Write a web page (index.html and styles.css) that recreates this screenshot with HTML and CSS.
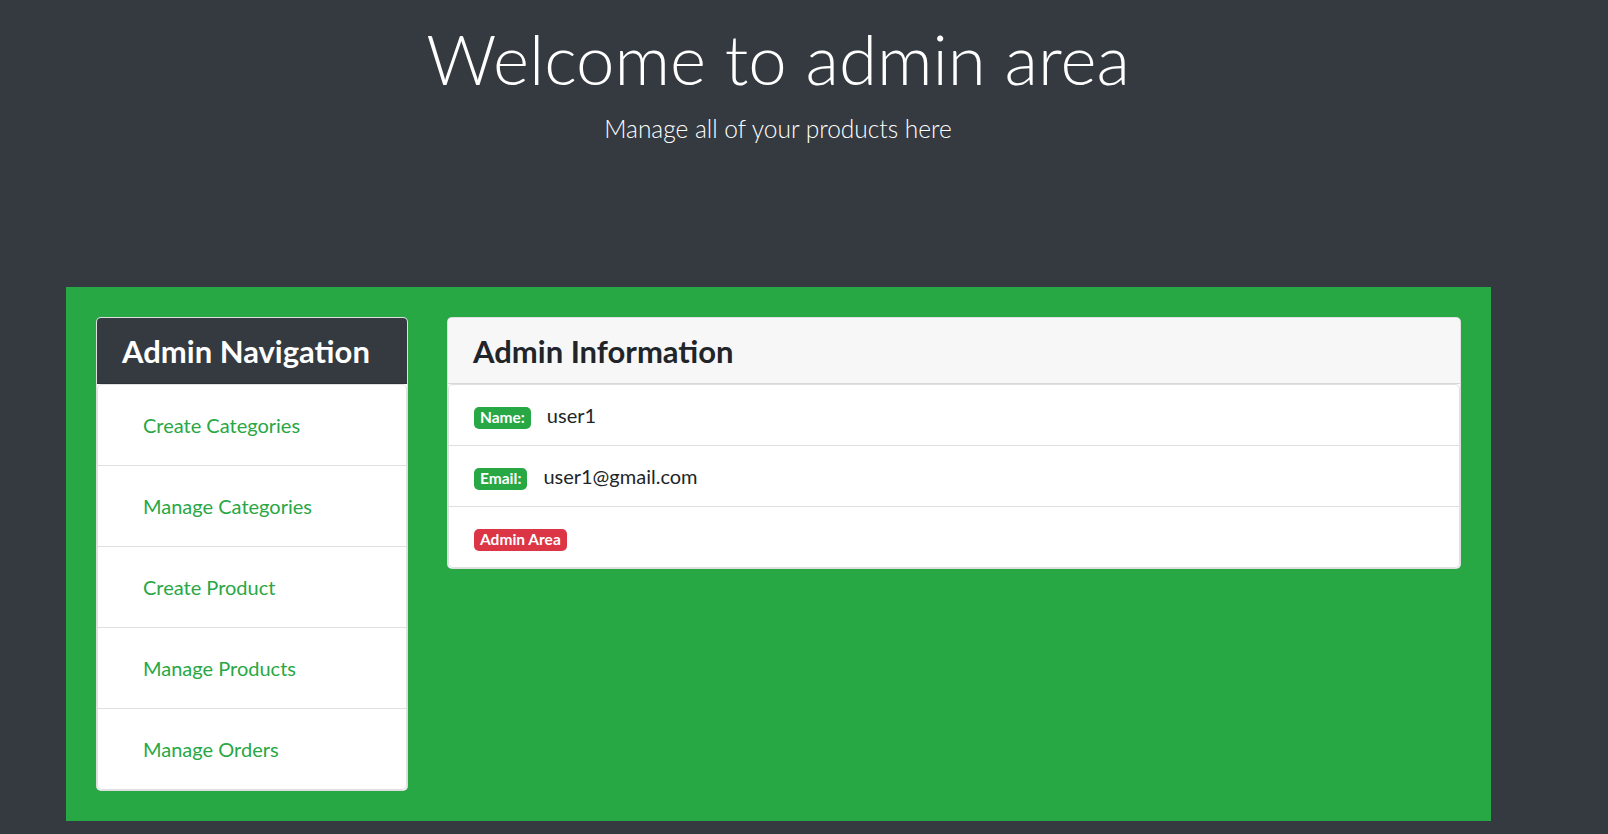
FILE: index.html
```html
<!DOCTYPE html>
<html lang="en">
<head>
<meta charset="utf-8">
<title>Admin Area</title>
<link rel="stylesheet" href="styles.css">
</head>
<body>
<div class="page">
  <header class="hero">
    <h1 class="hero-title">Welcome to admin area</h1>
    <p class="hero-lead">Manage all of your products here</p>
  </header>
  <main class="panel">
    <section class="card nav-card">
      <div class="card-header header-dark"><h4 class="card-title">Admin Navigation</h4></div>
      <ul class="list">
        <li class="list-item"><a class="nav-link" href="#">Create Categories</a></li>
        <li class="list-item"><a class="nav-link" href="#">Manage Categories</a></li>
        <li class="list-item"><a class="nav-link" href="#">Create Product</a></li>
        <li class="list-item"><a class="nav-link" href="#">Manage Products</a></li>
        <li class="list-item"><a class="nav-link" href="#">Manage Orders</a></li>
      </ul>
    </section>
    <section class="card info-card">
      <div class="card-header header-light"><h4 class="card-title">Admin Information</h4></div>
      <ul class="list">
        <li class="list-item info-row"><span class="badge badge-green">Name:</span>user1</li>
        <li class="list-item info-row"><span class="badge badge-green">Email:</span>user1@gmail.com</li>
        <li class="list-item info-row"><span class="badge badge-red">Admin Area</span></li>
      </ul>
    </section>
  </main>
</div>
</body>
</html>
```
FILE: styles.css
```css
* { box-sizing: border-box; }
html, body { margin: 0; padding: 0; }
body {
  background: #343a40;
  font-family: Lato, "Open Sans", sans-serif;
  color: #212529;
  height: 834px;
  overflow: hidden;
}
.page { width: 1556px; }
.hero {
  text-align: center;
  color: #fff;
  padding-top: 17px;
  height: 287px;
}
.hero-title {
  margin: 0 0 9px;
  font-size: 69px;
  font-weight: 300;
  line-height: 84px;
}
.hero-lead {
  margin: 0;
  font-size: 24.5px;
  font-weight: 300;
  line-height: 37px;
}
.panel {
  margin-left: 66px;
  width: 1425px;
  background: #28a745;
  padding: 30px;
  display: grid;
  grid-template-columns: 312px 1fr;
  column-gap: 39px;
  align-items: start;
}
.card {
  background: #fff;
  border: 1px solid rgba(0,0,0,.125);
  border-radius: 5px;
  overflow: hidden;
}
.card-header {
  height: 66px;
  padding: 15px 25px;
  border-bottom: 1px solid rgba(0,0,0,.125);
}
.header-dark { background: #343a40; color: #fff; }
.header-light { background: #f7f7f7; color: #212529; }
.card-title {
  margin: 0;
  font-size: 31px;
  font-weight: 700;
  line-height: 36px;
  white-space: nowrap;
}
.list { list-style: none; margin: 0; padding: 0; }
.list-item {
  border: 1px solid rgba(0,0,0,.125);
  margin-bottom: -1px;
  padding: 15px 25px;
  font-size: 20px;
  line-height: 30px;
  background: #fff;
}
.list-item:first-child { border-top-left-radius: 5px; border-top-right-radius: 5px; }
.list-item:last-child { margin-bottom: 0; border-bottom-left-radius: 5px; border-bottom-right-radius: 5px; }
.nav-link {
  display: block;
  padding: 10px 20px;
  color: #28a745;
  text-decoration: none;
}
.badge {
  display: inline-block;
  padding: 3.5px 6px;
  font-size: 15.5px;
  font-weight: 700;
  line-height: 1;
  color: #fff;
  border-radius: 5px;
  vertical-align: baseline;
  margin-right: 16px;
}
.badge-green { background: #28a745; }
.badge-red { background: #dc3545; }
```
